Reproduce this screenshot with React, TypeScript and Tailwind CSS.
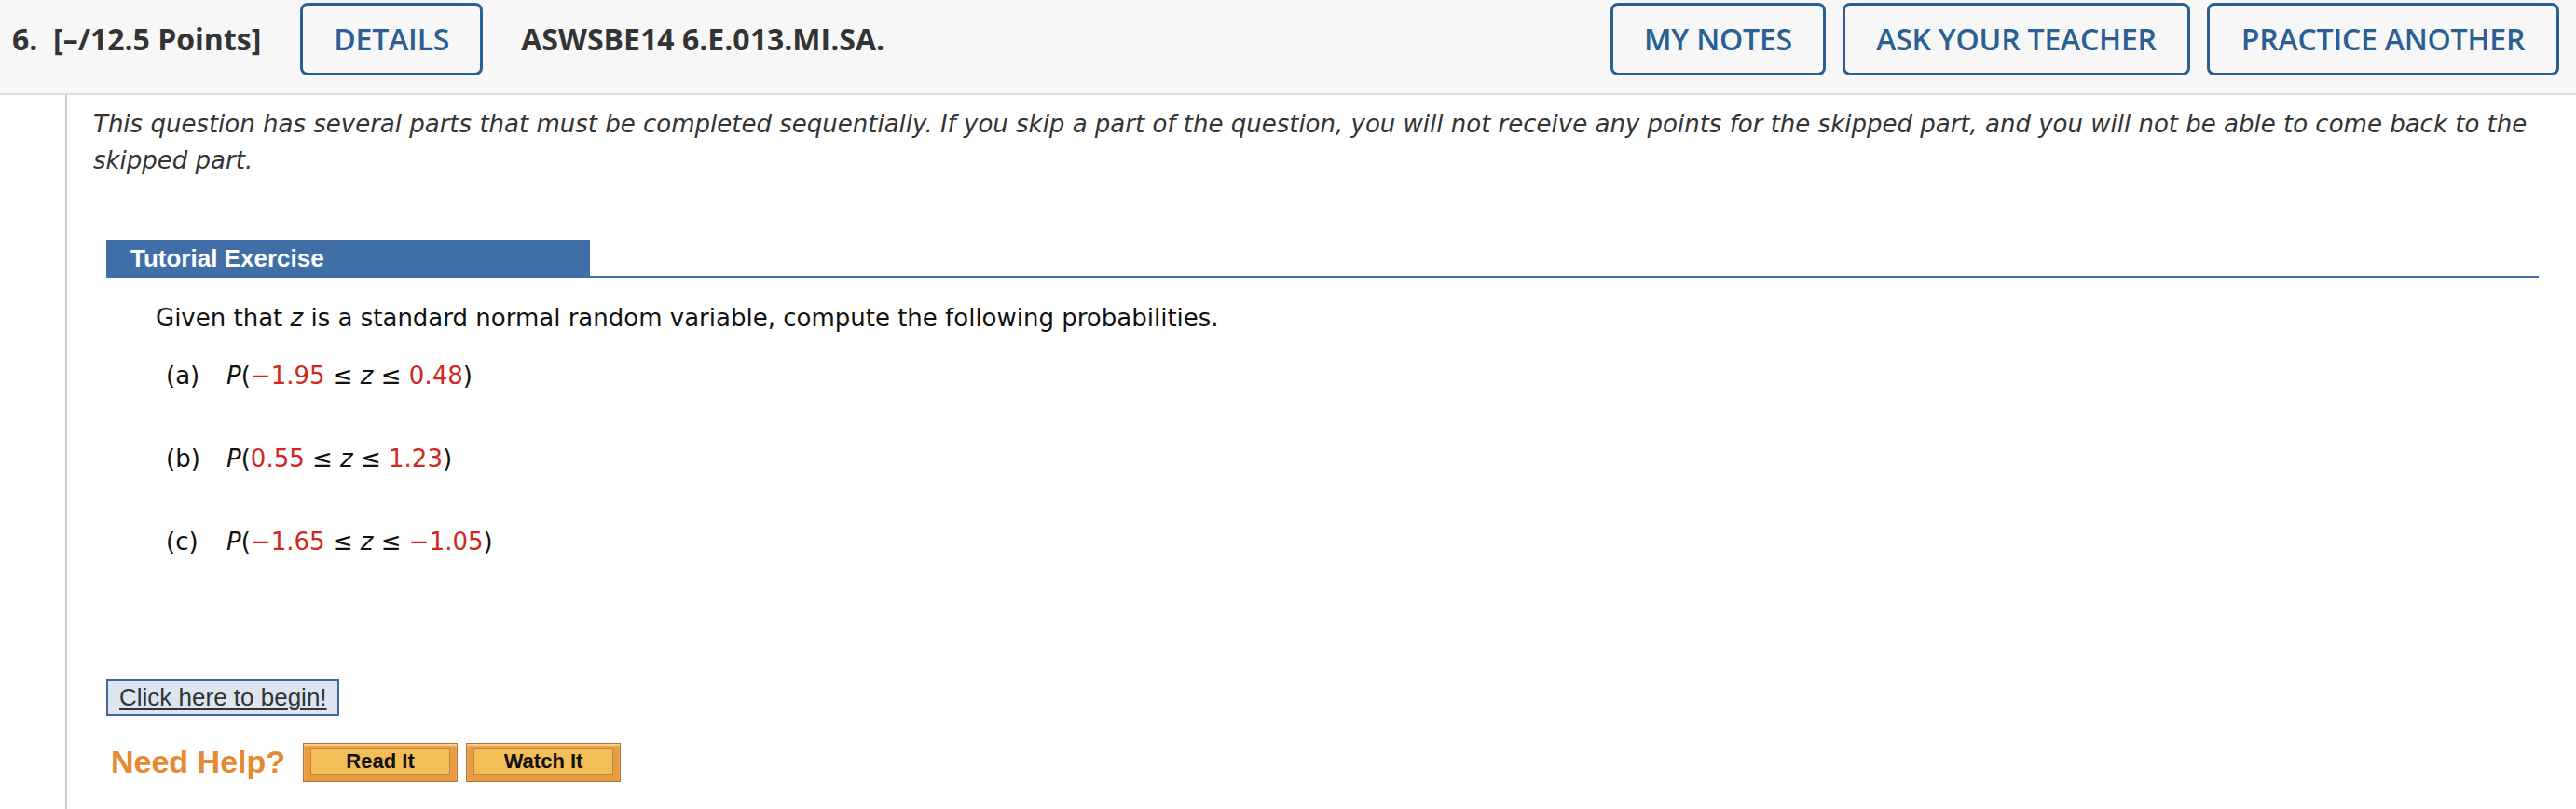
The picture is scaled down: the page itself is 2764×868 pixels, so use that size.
import React from "react";

const red = "text-[#d0281e]";

function HeaderButton({ label, width }: { label: string; width: string }) {
  return (
    <button
      className={`${width} h-[78px] flex items-center justify-center rounded-[8px] border-[3px] border-[#2b5f94] text-[32px] font-semibold text-[#2b5f94] tracking-[-0.2px]`}
    >
      {label}
    </button>
  );
}

function HelpButton({ label }: { label: string }) {
  return (
    <div className="w-[166px] h-[42px] flex border border-[#a8763c] bg-[#ea9b3f] px-[7px] pt-[5px] pb-[7px] shadow-[inset_0_2px_2px_rgba(255,235,190,0.7)]">
      <div className="flex-1 flex items-center justify-center border border-[#b88a4c] bg-[#f3bd58] text-[22px] font-bold text-[#111] [font-family:'Liberation_Sans',Arial,sans-serif]">
        {label}
      </div>
    </div>
  );
}

function Part({ letter, a, b, first }: { letter: string; a: string; b: string; first?: boolean }) {
  return (
    <div className={`flex items-baseline ml-[64px] leading-[30px] text-[26px] text-[#111] ${first ? "mt-[32px]" : "mt-[59px]"}`}>
      <span className="w-[65px]">({letter})</span>
      <span>
        <span className="italic">P</span>(
        <span className={red}>{a}</span> ≤ <span className="italic">z</span> ≤ <span className={red}>{b}</span>)
      </span>
    </div>
  );
}

export default function App() {
  return (
    <div className="w-full min-h-screen bg-white [font-family:'DejaVu_Sans',Verdana,sans-serif]">
      {/* question header */}
      <div className="h-[102px] bg-[#f7f7f7] border-b-2 border-[#dddddd] pt-[3px] [font-family:'Open_Sans',sans-serif]">
        <div className="flex items-center h-[78px] pl-[13px] pr-[18px]">
          <span className="whitespace-pre text-[32px] font-bold text-[#333]">6.  [–/12.5 Points]</span>
          <div className="ml-[42px]">
            <HeaderButton label="DETAILS" width="w-[196px]" />
          </div>
          <span className="ml-[41px] text-[32px] font-bold text-[#333]">ASWSBE14 6.E.013.MI.SA.</span>
          <div className="ml-auto flex gap-[18px]">
            <HeaderButton label="MY NOTES" width="w-[231px]" />
            <HeaderButton label="ASK YOUR TEACHER" width="w-[373px]" />
            <HeaderButton label="PRACTICE ANOTHER" width="w-[378px]" />
          </div>
        </div>
      </div>

      {/* body */}
      <div className="flex min-h-[766px]">
        <div className="w-[72px] shrink-0 border-r-2 border-[#cccccc]" />
        <div className="flex-1 pl-[28px] pr-[29px] pt-[12px]">
          <p className="italic text-[26px] leading-[39px] text-[#333]">
            This question has several parts that must be completed sequentially. If you skip a part of the question, you will not receive any points for the skipped part, and you will not be able to come back to the skipped part.
          </p>

          <div className="ml-[14px] mr-[11px] mt-[66px] border-b-2 border-[#406fa7]">
            <div className="w-[519px] h-[38px] flex items-center pl-[26px] bg-[#406fa7] text-white text-[26px] font-bold [font-family:'Liberation_Sans',Arial,sans-serif]">
              Tutorial Exercise
            </div>
          </div>

          <div className="ml-[14px]">
            <p className="mt-[28px] ml-[53px] text-[26px] leading-[30px] text-[#111]">
              Given that <span className="italic">z</span> is a standard normal random variable, compute the following probabilities.
            </p>
            <Part letter="a" a="−1.95" b="0.48" first />
            <Part letter="b" a="0.55" b="1.23" />
            <Part letter="c" a="−1.65" b="−1.05" />

            <div className="mt-[133px] w-[250px] h-[39px] flex items-center pl-[12px] border-2 border-[#40659a] bg-[#dce6f0] [font-family:'Liberation_Sans',Arial,sans-serif]">
              <span className="text-[26px] text-[#333] underline decoration-2 underline-offset-[3px]">Click here to begin!</span>
            </div>

            <div className="mt-[24px] flex items-center">
              <span className="ml-[5px] text-[34px] font-bold text-[#e48b31] [font-family:'Liberation_Sans',Arial,sans-serif]">
                Need Help?
              </span>
              <div className="ml-[19px] flex gap-[9px]">
                <HelpButton label="Read It" />
                <HelpButton label="Watch It" />
              </div>
            </div>
          </div>
        </div>
      </div>
    </div>
  );
}
